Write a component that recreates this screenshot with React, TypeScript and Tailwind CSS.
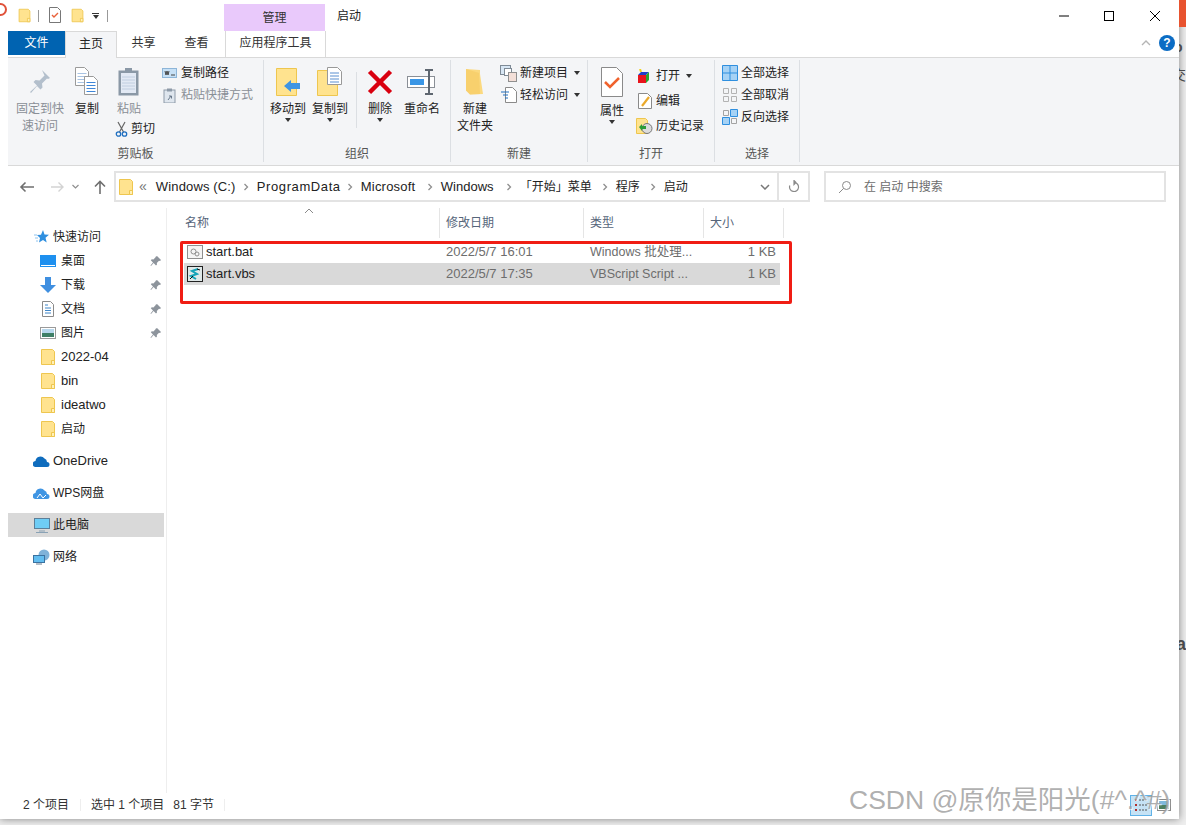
import type { ReactNode } from 'react'

const FONT = "font-['Liberation_Sans','Noto_Sans_CJK_SC',sans-serif]"

function Folder({ size = 18 }: { size?: number }) {
  return (
    <svg width={size} height={size} viewBox="0 0 18 18" className="shrink-0">
      <path d="M2.5 1.5h11l2 2v13h-13z" fill="#ffe38f" stroke="#eec64f" />
      <path d="M12.5 16.5v-4h3v4z" fill="#fff0b8" stroke="#eec64f" />
    </svg>
  )
}

function PageLines({ x, y, blue = false }: { x: number; y: number; blue?: boolean }) {
  return (
    <g>
      <path d={`M${x} ${y}h9l4 4v14h-13z`} fill="#fff" stroke="#9a9a9a" />
      {[6, 9, 12, 15].map((d) => (
        <path key={d} d={`M${x + 2} ${y + d}h9`} stroke={blue ? '#3f86d8' : '#a9c3e2'} />
      ))}
    </g>
  )
}

function Caret({ className = '' }: { className?: string }) {
  return <span className={`inline-block h-0 w-0 border-x-[3.5px] border-t-[4px] border-x-transparent border-t-[#333] ${className}`} />
}

function BigButton({ icon, label, muted, caret, w, labelMt = 'mt-0' }: { icon: ReactNode; label: ReactNode; muted?: boolean; caret?: boolean; w: string; labelMt?: string }) {
  return (
    <div className={`flex flex-col items-center ${w}`}>
      <div className="flex h-[38px] items-center justify-center">{icon}</div>
      <div className={`${labelMt} text-center text-[12px] leading-[17px] ${muted ? 'text-[#8a8f96]' : 'text-[#222]'}`}>{label}</div>
      {caret && <Caret />}
    </div>
  )
}

function SmallButton({ icon, label, muted, caret }: { icon: ReactNode; label: string; muted?: boolean; caret?: boolean }) {
  return (
    <div className={`flex h-[22px] items-center gap-[3px] whitespace-nowrap text-[12px] ${muted ? 'text-[#8a8f96]' : 'text-[#222]'}`}>
      <span className="flex w-[17px] justify-center">{icon}</span>
      <span>{label}</span>
      {caret && <Caret className="ml-[3px]" />}
    </div>
  )
}

function Group({ label, w, children }: { label: string; w: string; children: ReactNode }) {
  return (
    <div className={`flex h-[102px] shrink-0 flex-col border-r border-[#dcdfe3] ${w}`}>
      <div className="flex h-[83px] flex-1">{children}</div>
      <div className="text-center text-[12px] leading-[16px] text-[#555]">{label}</div>
    </div>
  )
}

function Pin() {
  return (
    <svg width="12" height="12" viewBox="0 0 12 12" className="shrink-0">
      <path d="M7 1l4 4-1 1-1-.3-2.200 2.200.2 1.600-1 1-2.400-2.400L1 11l-.5-.5L3 7.400.8 5.200l1-1 1.600.2L5.600 2.300 5.300 2z" fill="#8d949c" />
    </svg>
  )
}

function NavRow({ icon, label, pin, selected, indent, latin, mt }: { icon: ReactNode; label: string; pin?: boolean; selected?: boolean; indent?: boolean; latin?: boolean; mt?: string }) {
  return (
    <div className={`mr-[2px] flex h-6 items-center text-[#222] ${latin ? 'text-[13px]' : 'text-[12px]'} ${selected ? 'bg-[#d9d9d9]' : ''} ${indent ? 'pl-[29px]' : 'pl-[22px]'} ${mt ?? ''}`}>
      <span className={`flex justify-center ${indent ? 'w-[21px]' : 'w-[23px]'}`}>{icon}</span>
      <span className={indent ? 'ml-[3px]' : ''}>{label}</span>
      {pin && <span className="ml-auto mr-[2px]"><Pin /></span>}
    </div>
  )
}

function Crumb({ label, w }: { label: string; w: string }) {
  return <span className={`shrink-0 whitespace-nowrap ${w}`}>{label}</span>
}

function Chevron() {
  return (
    <svg width="6" height="8" viewBox="0 0 6 8" className="mx-[8px] shrink-0">
      <path d="M1.500 1l3 3-3 3" fill="none" stroke="#8f8f8f" strokeWidth="1.300" />
    </svg>
  )
}

function FileRow({ icon, name, date, type, selected }: { icon: ReactNode; name: string; date: string; type: string; selected?: boolean }) {
  return (
    <div className={`flex h-[22px] items-center text-[13px] ${selected ? 'bg-[#d9d9d9]' : ''}`}>
      <div className="flex w-[262px] items-center pl-[2px] text-[#222]">
        <span className="flex w-[18px] justify-center">{icon}</span>
        <span className="ml-[2px]">{name}</span>
      </div>
      <div className="w-[144px] text-[#6d6d6d]">{date}</div>
      <div className="w-[120px] whitespace-nowrap text-[12.5px] text-[#6d6d6d]">{type}</div>
      <div className="w-[70px] pr-[4px] text-right text-[#6d6d6d]">1 KB</div>
    </div>
  )
}

export default function App() {
  return (
    <div className={`relative h-[825px] w-[1186px] overflow-hidden bg-[#eeeeee] ${FONT}`}>
      <div className="flex h-[819px] w-[1179px] flex-col overflow-hidden bg-white pl-[8px] shadow-[0_0_8px_rgba(0,0,0,0.45)]">
        {/* title bar */}
        <div className="flex h-[31px] shrink-0 items-center">
          <div className="ml-[9px] flex items-center">
            <Folder size={15} />
            <span className="ml-[6px] h-[12px] w-px bg-[#999]" />
            <svg width="14" height="17" viewBox="0 0 14 17" className="ml-[9px]">
              <path d="M1.500.500h8l3 3v12h-11z" fill="#fff" stroke="#777" />
              <path d="M4 8l2 2 4-4" fill="none" stroke="#e8613a" strokeWidth="1.400" />
            </svg>
            <span className="ml-[8px]"><Folder size={15} /></span>
            <span className="ml-[7px] flex flex-col items-center">
              <span className="mb-px h-px w-[7px] bg-[#333]" />
              <Caret />
            </span>
            <span className="ml-[8px] h-[12px] w-px bg-[#999]" />
          </div>
          <div className="ml-[116px] flex h-[27px] w-[101px] items-center justify-center self-end bg-[#e9c9fb] text-[12px] text-[#333]">管理</div>
          <div className="ml-[12px] mt-[1px] text-[12px] text-[#222]">启动</div>
          <div className="ml-auto flex items-center">
            <svg width="10" height="2" viewBox="0 0 10 2" className="mr-[35px]"><path d="M0 1h10" stroke="#000" /></svg>
            <span className="mr-[36px] h-[10px] w-[10px] border border-black" />
            <svg width="10" height="10" viewBox="0 0 10 10" className="mr-[19px]"><path d="M0 0l10 10M10 0L0 10" stroke="#000" /></svg>
          </div>
        </div>

        {/* tabs */}
        <div className="flex h-[27px] shrink-0 items-stretch border-b border-[#d9d9d9] text-[12px]">
          <div className="flex h-[24px] w-[57px] items-center justify-center bg-[#0063b1] text-white">文件</div>
          <div className="relative z-10 -mb-px flex w-[52px] items-center justify-center border-x border-t border-[#d9d9d9] bg-[#f4f5f7] pb-[3px] text-[#222]">主页</div>
          <div className="flex w-[53px] items-center justify-center pb-[3px] text-[#333]">共享</div>
          <div className="flex w-[53px] items-center justify-center pb-[3px] text-[#333]">查看</div>
          <div className="ml-[2px] flex w-[101px] items-center justify-center border-x border-[#d9d9d9] pb-[3px] text-[#333]">应用程序工具</div>
          <div className="ml-auto mr-[4px] flex items-center gap-[8px] pb-[3px]">
            <svg width="10" height="6" viewBox="0 0 10 6"><path d="M1 5l4-4 4 4" fill="none" stroke="#b5b5b5" strokeWidth="1.400" /></svg>
            <span className="flex h-4 w-4 items-center justify-center rounded-full bg-[#0b6cc4] text-[12px] font-bold text-white">?</span>
          </div>
        </div>

        {/* ribbon */}
        <div className="flex h-[108px] shrink-0 items-start border-b border-[#d9d9d9] bg-[#f4f5f7] pt-[2px]">
          <Group label="剪贴板" w="w-[256px]">
            <div className="flex w-[256px] pt-[3px]">
              <BigButton
                w="w-[50px] ml-[7px]"
                muted
                icon={
                  <svg width="24" height="28" viewBox="0 0 24 28">
                    <path d="M14 2l8 8-2 1-1-.5-5 5 .5 4-2 2-3.500-3.500L3 25l-1-1 7-6.500L5.500 14l2-2 4 .5 5-5-.5-1z" fill="#b3bfcc" />
                  </svg>
                }
                label={<>固定到快<br />速访问</>}
              />
              <BigButton
                w="w-[38px] ml-[3px]"
                icon={
                  <svg width="26" height="30" viewBox="0 0 26 30">
                    <PageLines x={1.500} y={.500} />
                    <PageLines x={10.500} y={9.500} blue />
                  </svg>
                }
                label="复制"
              />
              <div className="ml-[5px] flex w-[36px] flex-col items-center">
                <div className="flex h-[38px] items-center">
                  <svg width="22" height="30" viewBox="0 0 22 30">
                    <rect x=".5" y="3.500" width="20" height="25" fill="#8a98a6" />
                    <rect x="3" y="6" width="15" height="20" fill="#e2e9f4" />
                    {[10, 13, 16, 19, 22].map((y) => <path key={y} d={`M4 ${y}h13`} stroke="#c0cee0" />)}
                    <rect x="7" y="1" width="7" height="5" fill="#8a98a6" />
                  </svg>
                </div>
                <div className="text-[12px] leading-[17px] text-[#8a8f96]">粘贴</div>
                <div className="ml-[4px] mt-[3px] flex items-center gap-[3px] self-start whitespace-nowrap text-[12px] leading-[16px] text-[#222]">
                  <svg width="13" height="16" viewBox="0 0 13 16" className="shrink-0">
                    <path d="M3 1l5.500 10M10 1L4.500 11" stroke="#666" fill="none" strokeWidth="1.200" />
                    <circle cx="3.500" cy="13" r="2.200" fill="none" stroke="#1f6fc0" strokeWidth="1.300" />
                    <circle cx="9.500" cy="13" r="2.200" fill="none" stroke="#1f6fc0" strokeWidth="1.300" />
                  </svg>
                  剪切
                </div>
              </div>
              <div className="ml-[14px] mt-[-1px] flex flex-col">
                <SmallButton
                  icon={
                    <svg width="15" height="10" viewBox="0 0 15 10">
                      <rect x=".5" y=".5" width="14" height="9" fill="#c6e0f6" stroke="#8db5d8" />
                      <path d="M3 3l1 4 1-4 1 4 1-4M9 7h4" stroke="#444" fill="none" />
                    </svg>
                  }
                  label="复制路径"
                />
                <SmallButton
                  muted
                  icon={
                    <svg width="13" height="15" viewBox="0 0 13 15">
                      <rect x="1" y="2" width="11" height="13" fill="#dfe6ee" stroke="#8d9aa8" />
                      <rect x="4" y="0.500" width="5" height="3" fill="#8d9aa8" />
                      <path d="M5 12l3-4M6 8h2.500v2.500" stroke="#68788a" fill="none" />
                    </svg>
                  }
                  label="粘贴快捷方式"
                />
              </div>
            </div>
          </Group>
          <Group label="组织" w="w-[187px]">
            <div className="flex pl-[3px] pt-[3px]">
              <BigButton
                w="w-[42px]"
                caret
                icon={
                  <svg width="28" height="30" viewBox="0 0 28 30">
                    <path d="M2.500 1.500h20v27h-20z" fill="#ffe38f" stroke="#eec64f" />
                    <path d="M10 19l7-6v3h9v6h-9v3z" fill="#3f95e3" />
                  </svg>
                }
                label="移动到"
              />
              <BigButton
                w="w-[42px]"
                caret
                icon={
                  <svg width="28" height="30" viewBox="0 0 28 30">
                    <path d="M1.500 3.500h20v25h-20z" fill="#ffe38f" stroke="#eec64f" />
                    <path d="M11.500.500h10l4 4v13h-14z" fill="#fff" stroke="#999" />
                    {[6, 9, 12, 15].map((y) => <path key={y} d={`M14 ${y}h9`} stroke="#5b8fd0" />)}
                  </svg>
                }
                label="复制到"
              />
              <span className="ml-[5px] mt-[9px] h-[56px] w-px bg-[#dcdfe3]" />
              <BigButton
                w="w-[38px] ml-[4px]"
                caret
                icon={
                  <svg width="26" height="26" viewBox="0 0 26 26">
                    <path d="M2.500 2.500l21 21M23.500 2.500l-21 21" stroke="#d9000f" strokeWidth="4.500" />
                  </svg>
                }
                label="删除"
              />
              <BigButton
                w="w-[42px] ml-[2px]"
                icon={
                  <svg width="30" height="28" viewBox="0 0 30 28">
                    <rect x=".5" y="8.500" width="27" height="11" fill="#fff" stroke="#8a8f96" />
                    <rect x="3" y="11" width="14" height="6" fill="#3a96e6" />
                    <path d="M18 2h8M22 2v24M18 26h8" stroke="#5e6670" strokeWidth="2" fill="none" />
                  </svg>
                }
                label="重命名"
              />
            </div>
          </Group>
          <Group label="新建" w="w-[137px]">
            <div className="flex pl-[4px] pt-[3px]">
              <BigButton
                w="w-[40px]"
                icon={
                  <svg width="20" height="28" viewBox="0 0 20 28">
                    <path d="M1 1l14 1v4l3 20-13 .5-4-4z" fill="#fbd97f" />
                    <path d="M1 1l13 4 1 21-10 .5-4-4z" fill="#f6c960" opacity=".6" />
                  </svg>
                }
                label={<>新建<br />文件夹</>}
              />
              <div className="ml-[5px] mt-[-1px] flex flex-col">
                <SmallButton
                  caret
                  icon={
                    <svg width="17" height="17" viewBox="0 0 17 17">
                      <rect x=".5" y=".5" width="10" height="9" fill="#d7e6f4" stroke="#7e8a96" />
                      <rect x="4.500" y="3.500" width="7" height="7" fill="#fff" stroke="#7e8a96" />
                      <rect x="8.500" y="7.500" width="8" height="9" fill="#f3dfd8" stroke="#8f8f8f" />
                    </svg>
                  }
                  label="新建项目"
                />
                <SmallButton
                  caret
                  icon={
                    <svg width="16" height="16" viewBox="0 0 16 16">
                      <path d="M4.500.500h7l4 4v11h-11z" fill="#fff" stroke="#8a8a8a" />
                      <path d="M0 5h8M2 8h5M4 11h3" stroke="#1f6fc0" />
                    </svg>
                  }
                  label="轻松访问"
                />
              </div>
            </div>
          </Group>
          <Group label="打开" w="w-[127px]">
            <div className="flex pl-[8px] pt-[3px]">
              <BigButton
                w="w-[32px]"
                caret
                labelMt="mt-[2px]"
                icon={
                  <svg width="22" height="30" viewBox="0 0 22 30">
                    <path d="M.5.500h15l6 6v23h-21z" fill="#fff" stroke="#8a8a8a" />
                    <path d="M4 15l5 5 9-9" fill="none" stroke="#f0622d" strokeWidth="2.500" />
                  </svg>
                }
                label="属性"
              />
              <div className="ml-[8px] mt-[2px] flex flex-col gap-[3px]">
                <SmallButton
                  caret
                  icon={
                    <svg width="16" height="15" viewBox="0 0 16 15">
                      <rect x="1" y="6" width="8" height="8" fill="#e8141c" />
                      <path d="M1 6l3-3h8L9 6z" fill="#1e3fc8" />
                      <path d="M9 6l3-3v8l-3 3z" fill="#2aa52e" />
                      <path d="M3 0l1 3" stroke="#f2d21b" strokeWidth="2" />
                    </svg>
                  }
                  label="打开"
                />
                <SmallButton
                  icon={
                    <svg width="14" height="16" viewBox="0 0 14 16">
                      <path d="M.5.500h9l4 4v11h-13z" fill="#fff" stroke="#8a8a8a" />
                      <path d="M4 13l7-9" stroke="#eaa92b" strokeWidth="2.200" />
                    </svg>
                  }
                  label="编辑"
                />
                <SmallButton
                  icon={
                    <svg width="17" height="16" viewBox="0 0 17 16">
                      <path d="M.5.500h9l2 2v13h-11z" fill="#ffe38f" stroke="#eec64f" />
                      <circle cx="11" cy="10.500" r="5" fill="#dcdcdc" stroke="#777" />
                      <path d="M3 9l3-3v2h4v3H6v2z" fill="#2d9b37" />
                    </svg>
                  }
                  label="历史记录"
                />
              </div>
            </div>
          </Group>
          <Group label="选择" w="w-[85px]">
            <div className="flex flex-col pl-[6px] pt-[2px]">
              <SmallButton
                icon={
                  <svg width="16" height="16" viewBox="0 0 16 16">
                    <path d="M.5.500h15v15H.5zM8 0v16M0 8h16" fill="#a6d2f5" stroke="#2f8fdf" />
                  </svg>
                }
                label="全部选择"
              />
              <SmallButton
                icon={
                  <svg width="16" height="16" viewBox="0 0 16 16">
                    <path d="M1.500 1.500h5v5h-5zM9.500 1.500h5v5h-5zM1.500 9.500h5v5h-5zM9.500 9.500h5v5h-5z" fill="none" stroke="#b3b3b3" />
                  </svg>
                }
                label="全部取消"
              />
              <SmallButton
                icon={
                  <svg width="16" height="16" viewBox="0 0 16 16">
                    <path d="M1.500 1.500h5v5h-5zM9.500 9.500h5v5h-5z" fill="none" stroke="#a3a3a3" />
                    <path d="M8.500.500h7v7h-7zM.5 8.500h7v7h-7z" fill="#a6d2f5" stroke="#2f8fdf" />
                  </svg>
                }
                label="反向选择"
              />
            </div>
          </Group>
        </div>

        {/* address row */}
        <div className="flex h-[42px] shrink-0 items-center pb-px">
          <svg width="16" height="12" viewBox="0 0 16 12" className="ml-[11px]"><path d="M15 6H2M6.500 1.500L2 6l4.500 4.500" fill="none" stroke="#6f6f6f" strokeWidth="1.600" /></svg>
          <svg width="14" height="12" viewBox="0 0 14 12" className="ml-[16px]"><path d="M0 6h12M7.500 1.500L12 6l-4.500 4.500" fill="none" stroke="#d3d3d3" strokeWidth="1.400" /></svg>
          <svg width="7" height="5" viewBox="0 0 7 5" className="ml-[7px]"><path d="M.5 1L3.500 4l3-3" fill="none" stroke="#8f8f8f" strokeWidth="1.200" /></svg>
          <svg width="12" height="14" viewBox="0 0 12 14" className="ml-[15px]"><path d="M6 14V2M1 6.500L6 1.500l5 5" fill="none" stroke="#6f6f6f" strokeWidth="1.600" /></svg>
          <div className="ml-[8px] flex h-[31px] w-[696px] items-center border-2 border-[#e3e3e3] text-[12px] text-[#222]">
            <span className="ml-[1px] flex w-[18px] shrink-0"><Folder size={18} /></span>
            <span className="ml-[4px] mr-[9px] text-[14px] text-[#777]">«</span>
            <Crumb label="Windows (C:)" w="w-[79px] text-[13px] tracking-[0.15px]" />
            <Chevron />
            <Crumb label="ProgramData" w="w-[82px] text-[13px] tracking-[0.6px]" />
            <Chevron />
            <Crumb label="Microsoft" w="w-[58px] text-[13px] tracking-[0.2px]" />
            <Chevron />
            <Crumb label="Windows" w="w-[57px] text-[13px]" />
            <Chevron />
            <Crumb label="「开始」菜单" w="w-[74px]" />
            <Chevron />
            <Crumb label="程序" w="w-[26px]" />
            <Chevron />
            <Crumb label="启动" w="w-[26px]" />
            <svg width="10" height="6" viewBox="0 0 10 6" className="ml-auto mr-[7px]"><path d="M1 1l4 4 4-4" fill="none" stroke="#777" strokeWidth="1.500" /></svg>
            <span className="flex h-full w-[31px] items-center justify-center border-l-2 border-[#e3e3e3]">
              <svg width="12" height="13" viewBox="0 0 12 13"><path d="M6 2.500a4.500 4.500 0 1 1-4.200 3M6 .5v4l2-2z" fill="none" stroke="#8a8a8a" strokeWidth="1.200" /></svg>
            </span>
          </div>
          <div className="ml-[14px] flex h-[31px] w-[342px] items-center border-2 border-[#e3e3e3] text-[12px] text-[#6d6d6d]">
            <svg width="14" height="14" viewBox="0 0 14 14" className="ml-[12px]"><circle cx="8.500" cy="5.500" r="4" fill="none" stroke="#8a8a8a" /><path d="M5.500 8.500L1 13" stroke="#8a8a8a" /></svg>
            <span className="ml-[12px]">在 启动 中搜索</span>
          </div>
        </div>

        {/* body */}
        <div className="flex min-h-0 flex-1">
          <div className="w-[159px] shrink-0 border-r border-[#eee] pt-[17px]">
            <NavRow label="快速访问" icon={
              <svg width="15" height="14" viewBox="0 0 15 14"><path d="M9 0l1.500 4.500 4.500.3-3.500 3 1.200 4.700L9 10l-4 2.500L6 8 3 5l4-.3z" fill="#2f8fdf" /><path d="M0 5h3M1 8h3M2 11h2" stroke="#8ec3ee" /></svg>
            } />
            <NavRow indent pin label="桌面" icon={
              <svg width="16" height="12" viewBox="0 0 16 12"><rect width="16" height="12" fill="#1e90ef" /><path d="M1 10.500h14" stroke="#fff" /></svg>
            } />
            <NavRow indent pin label="下载" icon={
              <svg width="16" height="16" viewBox="0 0 16 16"><path d="M5 0h6v8h5l-8 8-8-8h5z" fill="#3f8fe0" /></svg>
            } />
            <NavRow indent pin label="文档" icon={
              <svg width="12" height="16" viewBox="0 0 12 16"><path d="M.5.500h8l3 3v12H.5z" fill="#fff" stroke="#8a8a8a" /><path d="M3 4h3M3 7h6M3 9.500h6M3 12h6" stroke="#3f86c8" /></svg>
            } />
            <NavRow indent pin label="图片" icon={
              <svg width="16" height="12" viewBox="0 0 16 12"><rect x=".5" y=".5" width="15" height="11" fill="#fff" stroke="#9a9a9a" /><rect x="2" y="2" width="12" height="4" fill="#b7d7ec" /><rect x="2" y="6" width="12" height="4" fill="#3f7f66" /></svg>
            } />
            <NavRow indent latin label="2022-04" icon={<Folder size={18} />} />
            <NavRow indent latin label="bin" icon={<Folder size={18} />} />
            <NavRow indent latin label="ideatwo" icon={<Folder size={18} />} />
            <NavRow indent label="启动" icon={<Folder size={18} />} />
            <NavRow mt="mt-[8px]" latin label="OneDrive" icon={
              <svg width="17" height="11" viewBox="0 0 17 11"><path d="M3 11a3 3 0 0 1-.5-6 5 5 0 0 1 9-2.500A4 4 0 0 1 14 6a2.500 2.500 0 0 1 0 5z" fill="#0f6cbd" /></svg>
            } />
            <NavRow mt="mt-[8px]" label="WPS网盘" icon={
              <svg width="17" height="12" viewBox="0 0 17 12"><path d="M3 12a3 3 0 0 1-.5-6 5 5 0 0 1 9-2.500A4 4 0 0 1 14 7a2.500 2.500 0 0 1 0 5z" fill="#3f95e3" /><path d="M4 11l3-4 3 4 3-3" stroke="#fff" fill="none" /></svg>
            } />
            <NavRow mt="mt-[8px]" selected label="此电脑" icon={
              <svg width="16" height="15" viewBox="0 0 16 15"><rect x=".5" y=".5" width="15" height="10" fill="#6fcdf5" stroke="#5c7f99" /><path d="M5 13h6M2 14.500h12" stroke="#8aa2b5" /></svg>
            } />
            <NavRow mt="mt-[8px]" label="网络" icon={
              <svg width="17" height="16" viewBox="0 0 17 16"><circle cx="11" cy="6" r="5.500" fill="#7fb2d9" /><rect x=".5" y="6.500" width="11" height="7" fill="#62bdf0" stroke="#3b72a0" /><path d="M3 15h6" stroke="#6a7f91" /></svg>
            } />
          </div>
          <div className="min-w-0 flex-1 pl-[13px]">
            <div className="relative flex h-[30px] items-center text-[12px] text-[#56657a]">
              <svg width="10" height="5" viewBox="0 0 10 5" className="absolute left-[124px] top-0"><path d="M1 5l4-4 4 4" fill="none" stroke="#8a8a8a" /></svg>
              <div className="flex h-full w-[260px] items-center border-r border-[#e5e5e5] pl-[5px]">名称</div>
              <div className="flex h-full w-[144px] items-center border-r border-[#e5e5e5] pl-[6px]">修改日期</div>
              <div className="flex h-full w-[120px] items-center border-r border-[#e5e5e5] pl-[6px]">类型</div>
              <div className="flex h-full w-[80px] items-center border-r border-[#e5e5e5] pl-[6px]">大小</div>
            </div>
            <div className="ml-[4px] mt-[3px] w-[596px]">
              <FileRow
                name="start.bat"
                date="2022/5/7 16:01"
                type="Windows 批处理..."
                icon={
                  <svg width="16" height="14" viewBox="0 0 16 14"><rect x=".5" y=".5" width="15" height="13" fill="#f4f4f4" stroke="#8f8f8f" /><circle cx="6.500" cy="6.500" r="2.500" fill="none" stroke="#8f8f8f" /><circle cx="10" cy="9" r="2" fill="none" stroke="#8f8f8f" /></svg>
                }
              />
              <FileRow
                selected
                name="start.vbs"
                date="2022/5/7 17:35"
                type="VBScript Script ..."
                icon={
                  <svg width="16" height="16" viewBox="0 0 16 16"><rect x=".5" y=".5" width="15" height="15" fill="#dfe8e8" stroke="#222" /><path d="M11 3L5 5l5 3-6 2 5 3" fill="none" stroke="#13a3b8" strokeWidth="2" /><path d="M3 13l3-3M10 3l3 1" stroke="#111" /></svg>
                }
              />
            </div>
          </div>
        </div>

        {/* status bar */}
        <div className="flex h-[26px] shrink-0 items-center pb-[2px] text-[12px] text-[#333]">
          <span className="ml-[15px]">2 个项目</span>
          <span className="ml-[11px] h-[12px] w-px bg-[#eee]" />
          <span className="ml-[10px]">选中 1 个项目</span>
          <span className="ml-[9px]">81 字节</span>
          <span className="ml-[10px] h-[12px] w-px bg-[#eee]" />
          <div className="ml-auto mr-[8px] flex items-center gap-[5px]">
            <span className="flex h-[21px] w-[22px] items-center justify-center border border-[#5fb2e8] bg-[#c5e2f5]">
              <svg width="14" height="14" viewBox="0 0 14 14"><path d="M1 2h2M1 7h2M1 12h2" stroke="#b03030" strokeWidth="2" /><path d="M5 2h8M5 7h8M5 12h8" stroke="#555" strokeDasharray="2 1" /></svg>
            </span>
            <svg width="14" height="12" viewBox="0 0 14 12"><rect x=".5" y=".5" width="13" height="11" fill="#fff" stroke="#888" /><rect x="2" y="2" width="10" height="4" fill="#7fb9dd" /><rect x="2" y="6" width="10" height="4" fill="#4d7f5f" /></svg>
          </div>
        </div>
      </div>

      {/* annotation drawn over the screenshot */}
      <div className="pointer-events-none absolute left-[180px] top-[241px] h-[63px] w-[612px] rounded-[2px] border-[3px] border-[#f01d14]" />

      {/* other windows peeking out at the edges */}
      <div className="absolute left-0 top-[3px] h-[14px] w-[7px] overflow-hidden">
        <span className="absolute -left-[6px] top-0 h-[13px] w-[13px] rounded-full border-2 border-[#e0523a]" />
      </div>
      <div className="absolute left-[1179px] top-0 h-[825px] w-[7px] overflow-hidden text-[#4a4a4a]">
        <div className="h-[27px] bg-[#e8532f]" />
        <div className="-ml-[5px] mt-[12px] text-[14px] font-bold leading-[16px]">o</div>
        <div className="-ml-[7px] mt-[12px] text-[14px] leading-[16px]">交</div>
        <div className="-ml-[3px] mt-[553px] text-[18px] font-bold leading-[16px]">a</div>
      </div>

      {/* watermark */}
      <div className="pointer-events-none absolute left-[849px] top-[785px] whitespace-nowrap text-[26.5px] leading-[30px] text-[#9a9a9a]/80 [text-shadow:1px_1px_1px_rgba(255,255,255,0.9)]">
        CSDN @原你是阳光(#^.^#)
      </div>
    </div>
  )
}
